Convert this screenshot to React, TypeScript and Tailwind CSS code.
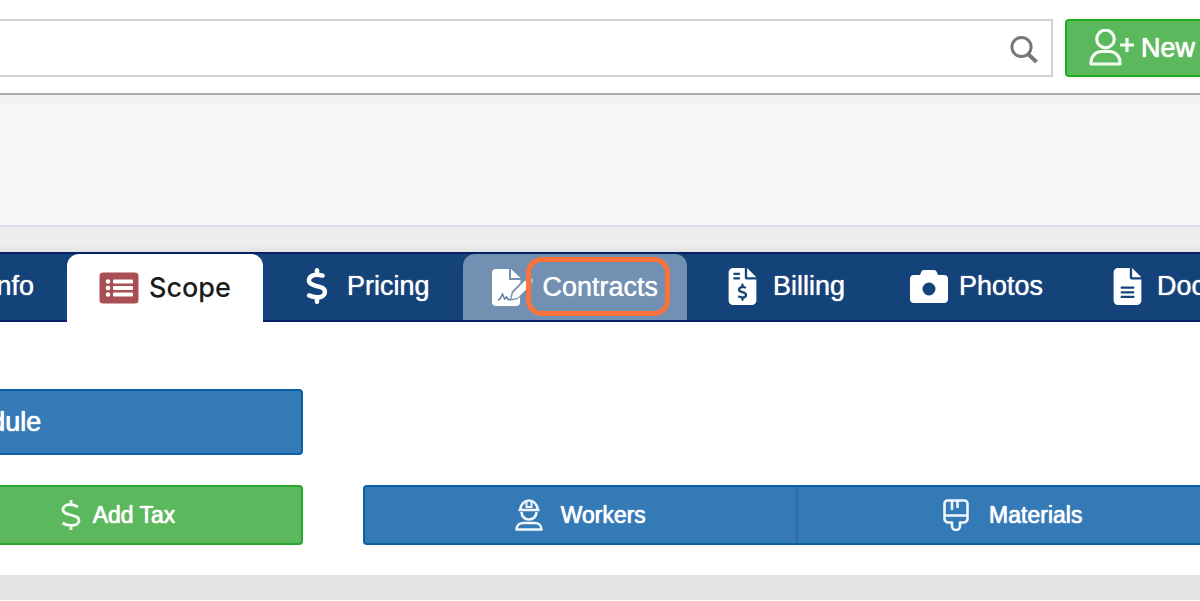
import { type ReactNode } from "react";
import { FaDollarSign, FaFileInvoiceDollar, FaFileLines } from "react-icons/fa6";

/* ── Icons ── */
function SearchIcon() {
  return (
    <svg width="30" height="34" viewBox="0 0 30 34" fill="none" stroke="#777" strokeWidth="3">
      <circle cx="12.5" cy="16" r="9.600" />
      <path d="M19 23l8.500 8" strokeWidth="4" />
    </svg>
  );
}

function UserPlusIcon() {
  return (
    <svg width="46" height="38" viewBox="0 0 46 38" fill="none" stroke="#f2fbf2" strokeWidth="3.200">
      <circle cx="16.5" cy="10" r="8.800" />
      <path d="M2 35v-1.500C2 27 7 22.500 12 22.500h9c5 0 10 4.500 10 11V35z" strokeLinejoin="round" />
      <path d="M31 16h14M38 9v14" />
    </svg>
  );
}

function ListIcon() {
  return (
    <svg width="40" height="32" viewBox="0 0 40 32">
      <rect x="0.500" y="0.500" width="39" height="31" rx="3.500" fill="#a94f54" />
      <g fill="#fff">
        <circle cx="9" cy="9.500" r="2.300" />
        <circle cx="9" cy="16" r="2.300" />
        <circle cx="9" cy="22.500" r="2.300" />
        <rect x="14" y="7.500" width="20" height="4" rx="1" />
        <rect x="14" y="14" width="20" height="4" rx="1" />
        <rect x="14" y="20.500" width="20" height="4" rx="1" />
      </g>
    </svg>
  );
}

function ContractIcon() {
  return (
    <svg width="42" height="37" viewBox="0 0 42 37" className="shrink-0">
      <path
        d="M5 0h13v11h11.500v2.500L20.500 23 19 31.500l7-1 3-2.500v5a4 4 0 0 1-4 4H5a4 4 0 0 1-4-4V4a4 4 0 0 1 4-4z"
        fill="#fff"
      />
      <path d="M20 0l9.500 9H20z" fill="#fff" />
      <path d="M20.500 30l1.500-6L34 11.500l5 5L26.500 29z" fill="#fff" />
      <path d="M35.500 10.500l1.500-1.500c1-1 2.500-1 3.500 0l1 1c1 1 1 2.500 0 3.500L40 15z" fill="#fff" opacity="0.400" />
      <path d="M7 31l2-1 2.500-5 2 5 2-2 1.500 2.500h3" fill="none" stroke="#5d7ba0" strokeWidth="1.500" />
    </svg>
  );
}

function CameraIcon() {
  return (
    <svg width="38" height="33" viewBox="0 0 38 33">
      <path
        fillRule="evenodd"
        fill="#fff"
        d="M14 0h10a3 3 0 0 1 2.800 2L28 5h6a4 4 0 0 1 4 4v20a4 4 0 0 1-4 4H4a4 4 0 0 1-4-4V9a4 4 0 0 1 4-4h6l1.200-3A3 3 0 0 1 14 0zm5 12.500a6.500 6.500 0 1 0 0 13 6.500 6.500 0 0 0 0-13z"
      />
    </svg>
  );
}

function ThinDollarIcon() {
  return (
    <svg width="20" height="30" viewBox="0 0 20 30" fill="none" stroke="#f2fbf2" strokeWidth="2.800">
      <path d="M17 7C14 5 11.500 4.500 9 4.500c-4 0-7 1.800-7 5 0 7 16 4 16 11 0 3.200-3.500 5-8 5-3 0-6-1-8.500-2.500M10 0v5M10 25v5" />
    </svg>
  );
}

function WorkerIcon() {
  return (
    <svg width="28" height="32" viewBox="0 0 28 32" fill="none" stroke="#f1f6fb" strokeWidth="2.600">
      <path d="M5.500 10.500c0-5 4-9 8.500-9s8.500 4 8.500 9M3.500 11h21" />
      <path d="M11.500 2v6h5V2" strokeWidth="2" />
      <path d="M6.500 13c0 4.500 3.500 7.500 7.500 7.500s7.500-3 7.500-7.500" />
      <path
        d="M1.500 30.500c0-4 3-6.500 7-6.500h11c4 0 7 2.500 7 6.500z"
        strokeLinejoin="round"
      />
    </svg>
  );
}

function BrushIcon() {
  return (
    <svg width="26" height="32" viewBox="0 0 26 32" fill="none" stroke="#f1f6fb" strokeWidth="2.600">
      <path
        d="M4.500 1.500h17a3 3 0 0 1 3 3v15a4 4 0 0 1-4 4H17v3.500a4 4 0 0 1-8 0v-3.500H5.500a4 4 0 0 1-4-4v-15a3 3 0 0 1 3-3z"
        strokeLinejoin="round"
      />
      <path d="M2 16.500h22M9 2v9M14.500 2v7" />
    </svg>
  );
}

/* ── Tabs ── */
interface TabProps {
  label: string;
  icon?: ReactNode;
  className?: string;
  highlighted?: boolean;
}

function Tab({ label, icon, className = "px-8 pb-1 text-white", highlighted = false }: TabProps) {
  return (
    <a
      href="#"
      className={`flex shrink-0 items-center gap-[10px] text-[27px] leading-8 ${className}`}
    >
      {icon && <span className="flex w-10 shrink-0 justify-center">{icon}</span>}
      <span className="relative">
        {label}
        {highlighted && (
          <span className="absolute -top-[14px] -right-3 -bottom-[13px] -left-4 rounded-2xl border-[5px] border-[#fb733c]" />
        )}
      </span>
    </a>
  );
}

/* ── Action buttons ── */
interface ActionButtonProps {
  label: string;
  icon?: ReactNode;
  className?: string;
}

function ActionButton({ label, icon, className = "" }: ActionButtonProps) {
  return (
    <button
      type="button"
      className={`flex items-center justify-center text-white [text-shadow:0_0_1px_#fff,0_0_1px_#fff] ${className}`}
    >
      {icon}
      {label}
    </button>
  );
}

export default function App() {
  return (
    <div className="overflow-x-hidden bg-white font-['Liberation_Sans',Arial,sans-serif]">
      <header className="flex h-[95px] items-start gap-3 overflow-hidden border-b-2 border-[#acacac] pt-[19px]">
        <div className="-ml-1 flex h-[58px] flex-1 items-center border-2 border-[#cfcfcf] bg-white pr-3">
          <input type="text" aria-label="Search" className="h-full min-w-0 flex-1 px-4 text-2xl outline-none" />
          <button type="button" aria-label="Run search">
            <SearchIcon />
          </button>
        </div>
        <button
          type="button"
          className="-mr-1 flex h-[58px] w-[139px] shrink-0 items-center gap-[6px] rounded-sm border-2 border-[#1cae22] bg-[#5cb85c] pl-[22px] text-[27px] text-white [text-shadow:0_0_1px_#fff,0_0_1px_#fff]"
        >
          <UserPlusIcon />
          New
        </button>
      </header>

      <div className="h-[132px] border-b-2 border-[#dcdbe6] bg-linear-to-b from-[#f1f1f3] to-[#f6f6f9] to-10%" />
      <div className="h-[25px] bg-linear-to-b from-[#eeeeee] from-70% to-[#e2e2e2]" />

      <nav className="flex h-[70px] items-stretch overflow-hidden bg-[#144379] pt-[2px] shadow-[inset_0_2px_#052065,inset_0_-2px_#052065]">
        <Tab
          label="Info"
          className="w-[67px] justify-end pr-[33px] pb-1 text-white [text-shadow:0_0_1px_#fff]"
        />
        <Tab
          label="Scope"
          icon={<ListIcon />}
          className="rounded-t-xl bg-white px-8 font-['Inter',sans-serif] font-medium text-[#1c1c1c]"
        />
        <Tab
          label="Pricing"
          icon={<FaDollarSign size={36} />}
          className="px-[34px] pb-1 text-white [text-shadow:0_0_1px_#fff]"
        />
        <Tab
          label="Contracts"
          icon={<ContractIcon />}
          className="mr-1 mb-[2px] rounded-t-xl bg-[#7290b1] px-[29px] text-white [text-shadow:0_0_1px_#fff]"
          highlighted
        />
        <Tab
          label="Billing"
          icon={<FaFileInvoiceDollar size={37} />}
          className="px-8 pb-1 text-white [text-shadow:0_0_1px_#fff]"
        />
        <Tab
          label="Photos"
          icon={<CameraIcon />}
          className="px-8 pb-1 text-white [text-shadow:0_0_1px_#fff]"
        />
        <Tab
          label="Documents"
          icon={<FaFileLines size={37} />}
          className="px-8 pb-1 text-white [text-shadow:0_0_1px_#fff]"
        />
      </nav>

      <main className="flex gap-[60px] pt-[67px] pb-[30px]">
        <div className="flex w-[303px] shrink-0 flex-col gap-[30px]">
          <ActionButton
            label="Schedule"
            className="-ml-[333px] h-[66px] rounded-sm border-2 border-[#0b60a6] bg-[#337ab7] text-[27px]"
          />
          <ActionButton
            label="Add Tax"
            icon={<ThinDollarIcon />}
            className="-ml-[67px] h-[60px] gap-3 rounded-sm border-2 border-[#2aa52e] bg-[#5cb85c] text-[23px]"
          />
        </div>
        <div className="-mr-[30px] flex h-[60px] flex-1 self-end rounded-sm border-2 border-[#0b60a6] bg-[#337ab7] text-[23px]">
          <ActionButton
            label="Workers"
            icon={<WorkerIcon />}
            className="flex-1 gap-[18px] border-r-2 border-[#2e6da4]"
          />
          <ActionButton label="Materials" icon={<BrushIcon />} className="flex-1 gap-5" />
        </div>
      </main>

      <footer className="h-[25px] bg-[#e4e4e4]" />
    </div>
  );
}
